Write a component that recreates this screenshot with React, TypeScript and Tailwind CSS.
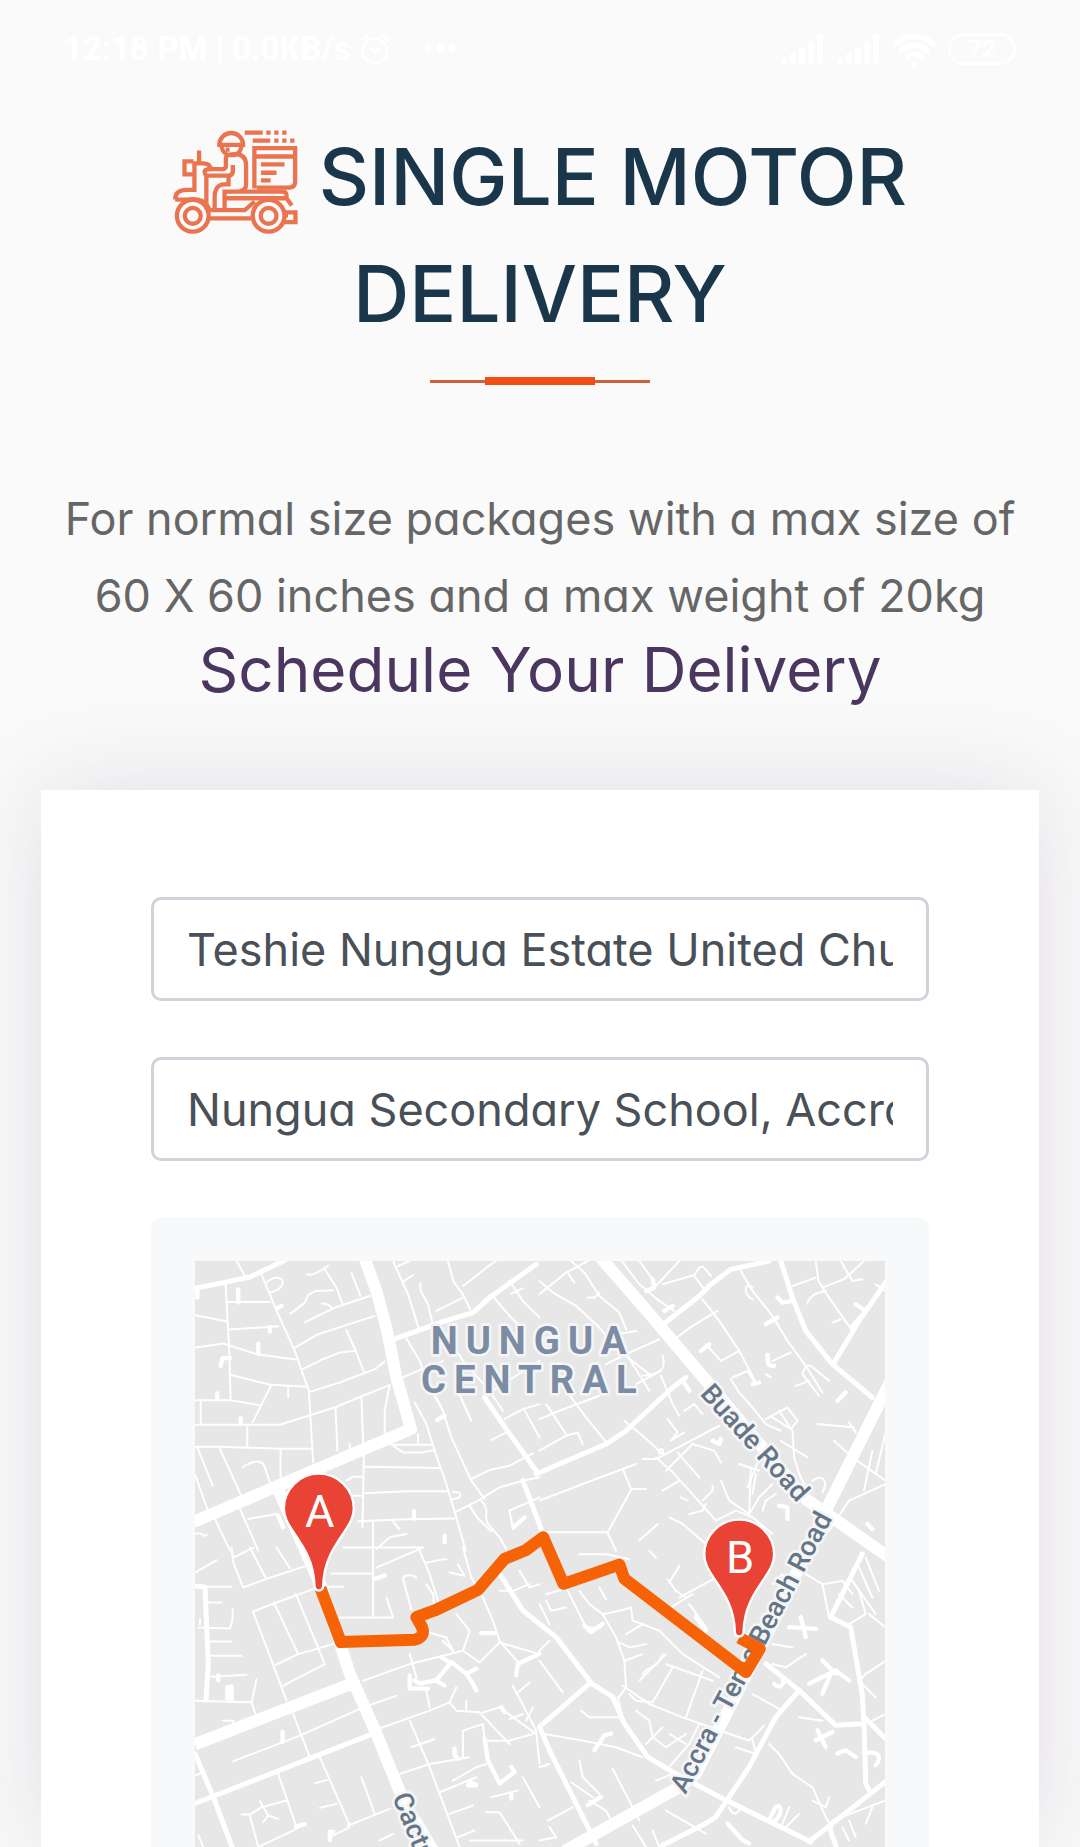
import { Wifi } from "lucide-react";

const minorTopLeft = [
  "M15 193L112 212", "M107 100L118 300L122 445", "M140 30L165 75", "M215 70L260 180L315 300L357 420L370 635",
  "M112 153L240 153", "M118 236L265 226", "M15 290L100 278L200 310L318 326", "M122 372L240 402L355 408",
  "M245 402L188 515", "M15 448H120L208 463", "M15 522H270L365 492L440 468L600 402", "M32 448V520", "M172 522V588",
  "M15 588H90L270 594L362 594", "M22 590L68 705", "M15 672L52 775", "M88 590L155 738", "M272 595V680",
  "M158 650C185 632 215 622 225 650L240 695", "M230 95C255 70 290 80 275 105C265 120 250 122 240 125",
  "M302 188L345 155L355 132L378 120L430 118", "M350 70C375 75 385 62 415 45", "M405 55L440 110L458 158",
  "M345 214L440 168L540 135", "M395 158C410 158 415 160 428 172", "M485 66L512 135", "M315 290L385 250L555 195",
  "M470 238L500 305L522 362", "M340 354L400 325L450 305L495 300", "M357 424L450 395L555 355L585 332",
  "M295 408V440", "M437 470L443 600", "M515 435L520 580", "M600 402L585 480V550",
  "M610 30L655 130L688 235", "M625 45L660 30", "M640 92L670 72", "M692 95V118L715 160L728 215",
  "M775 30L792 92L820 130L842 175", "M820 140L740 180", "M820 105L860 75L890 50L920 30", "M905 130L960 195L985 220",
  "M960 90L1000 150L1050 200", "M965 128L1000 112", "M650 262L690 330L715 400L760 480L785 560L845 690L885 745",
  "M610 392L720 345L760 330", "M675 455L710 520L735 600L770 700L800 800L828 900", "M600 578L640 605H700L735 598",
  "M610 582H725", "M685 550V578", "M522 610V640L518 830", "M525 648L752 652", "M525 728L650 722H775",
  "M505 812L650 806L795 804", "M480 580V594", "M550 815V900", "M610 812L628 835", "M470 690L490 678H515",
  "M490 735H515", "M800 410L845 510", "M905 568L950 545", "M945 505L1000 475L1050 460", "M1005 478L1050 560",
  "M845 685L900 658L960 645L1030 608", "M795 785L865 750L930 710L1000 690L1050 680", "M790 725C820 720 820 745 790 745",
  "M875 750C905 780 880 800 895 820L930 860L950 895", "M840 765L862 800L905 842", "M960 780L1050 740", "M960 780L970 835",
  "M150 775L205 900", "M175 805L260 790", "M75 805L120 900", "M15 850C40 840 40 865 50 852", "M560 895L600 860L650 850",
  "M885 435L1050 330", "M940 480L900 420L820 330L780 270", "M740 440L760 480",
];
const minorTopRight = [
  "M0 130L80 65L145 30", "M85 65L105 95", "M95 30L135 65L180 135L240 185L260 235", "M145 140H165L180 125",
  "M0 90L40 125L110 165L180 230L240 300L330 370", "M240 20L300 100L360 150L405 180", "M300 30L340 85", "M340 115L420 30",
  "M370 100L465 72L480 50C495 40 500 60 515 75", "M465 75L495 115", "M490 145L540 210L600 300L650 395", "M405 265L460 225L535 180",
  "M500 280L545 330L600 300", "M605 60L640 120L700 195L745 270L800 345L850 425", "M640 145C610 130 615 90 640 110",
  "M700 330L755 305", "M760 105L830 80", "M830 30L838 90L870 140L940 240", "M805 155C815 130 835 125 860 120",
  "M905 30L940 90L970 85", "M850 110L915 85L975 30", "M880 215L905 205", "M1010 100L1040 120",
  "M800 345H815L870 390", "M800 345L790 370L840 435", "M770 405L810 390", "M580 380L625 360L650 400",
  "M575 385L600 425L640 470L680 520L725 540", "M680 370L695 380", "M680 505L745 470L775 510L755 535L700 500",
  "M720 480L760 540L765 620L780 670L800 710", "M725 570L805 620", "M835 520L945 530", "M930 515L950 545",
  "M885 570L940 620L1040 690", "M1000 600L975 720", "M1040 545L1010 670", "M180 305L230 250L290 240", "M200 340L260 310L360 265",
  "M240 270L280 340L330 420", "M370 315C380 350 370 370 310 375", "M365 375L400 460L420 495", "M290 400L365 360",
  "M0 600L80 555L115 545L130 580", "M20 460L80 550", "M80 420L140 500L205 580", "M0 505L60 480L180 435", "M255 510L310 555L370 610",
  "M0 750L130 700L290 640", "M250 655L275 715H320", "M275 718L205 845L0 845", "M205 848L230 900", "M310 625L350 625L540 525",
  "M350 620L400 665L450 720L530 810", "M415 605L480 680", "M360 610C350 590 380 590 370 610", "M380 660L430 610L460 580",
  "M460 580L525 600L545 635", "M385 505L415 545L395 570L435 545", "M370 720L420 690", "M425 740L445 750", "M435 480L465 460L490 490",
  "M545 690L570 750L630 790L660 740L700 700", "M635 655L630 785", "M490 750L520 720V705", "M670 600L625 710", "M600 640L660 660",
  "M530 810L590 780L640 800L700 850", "M450 790L490 780L500 760", "M390 800L430 820L500 880", "M300 870L355 820", "M650 670L640 730",
  "M800 860L870 840L930 750L1040 700", "M670 780L680 750L710 730", "M820 690C850 670 870 690 850 725",
];
const minorBottomLeft = [
  "M15 75L80 38", "M125 0L130 45L160 120L235 92L350 55", "M180 0L228 92", "M260 0L300 62", "M130 30L190 0",
  "M40 118H125", "M45 165H95", "M25 240L120 243L128 215V185", "M30 230V215", "M50 282H125", "M50 325H155", "M65 388L170 382",
  "M15 460L185 465L200 395", "M185 465L200 510", "M100 520H130V545", "M190 192L220 180L370 125",
  "M190 195L230 300L290 460", "M252 165L325 320L258 352", "M318 140L405 350L280 415", "M325 320L430 290", "M310 500L360 630",
  "M130 642L330 565L520 480L620 445", "M390 630L480 835", "M375 708L412 698", "M265 680L320 840", "M390 782L440 770",
  "M475 835L600 785", "M515 690L555 800", "M480 840L420 870", "M155 802H180L215 780L290 760", "M180 805L205 900",
  "M210 762L235 805L220 825", "M235 805L265 815", "M205 900L320 845", "M15 685L40 675", "M25 865L40 900",
  "M425 78H550", "M410 118H460", "M450 210H610L590 150", "M550 0V205", "M460 0H700L560 60",
  "M690 10L720 80L745 160", "M770 35C740 35 730 45 710 45", "M665 185L640 95C640 80 670 80 680 90", "M820 0L845 90L880 150L910 220L930 280L990 350",
  "M805 50L825 85L780 75", "M710 110L730 140L735 190", "M520 400L660 350L820 310L840 250L800 200", "M660 320L680 390",
  "M700 250L770 270L790 310", "M820 310L870 345L930 285L1050 320", "M760 280L790 310", "M565 545L720 490L780 465L800 420",
  "M720 480L710 430", "M780 465L800 490L870 495L960 590", "M660 520L720 660L810 900", "M630 680L720 650L840 630", "M665 600L735 575",
  "M820 630V550L880 530L885 580H960L1030 560", "M750 735L860 690", "M780 800L850 775", "M805 870L855 850",
  "M790 700L860 660L890 650", "M905 750L985 730", "M970 415L1040 550L1050 650", "M980 440L1020 405", "M880 495L930 480L1040 560",
  "M960 515L1000 500", "M1030 480L1010 520", "M890 795L930 795L990 890", "M1050 780L1000 690", "M840 880L1000 880",
  "M570 880L610 860", "M990 70L1020 120L1050 110", "M930 130H970L1020 110", "M830 460V490",
];
const minorBottomRight = [
  "M80 120L110 180L140 240H185", "M20 160L35 190L80 180", "M20 140L70 125", "M30 280L0 310", "M0 170L30 230",
  "M120 130L150 170L190 200L230 270L255 340L260 420L235 455", "M120 20H200L270 35", "M180 120L200 155", "M330 10L350 30",
  "M390 105L420 55", "M385 95L410 130L440 150", "M370 200L410 170L460 140", "M420 150L530 90", "M450 170L500 240",
  "M190 200L240 190L275 180L280 220L310 230", "M260 260L310 230L360 250L430 320L540 390", "M240 285L270 300L320 290",
  "M255 340L310 320", "M310 380C330 350 350 370 370 320", "M300 400L350 350L380 320", "M250 415L330 470L430 510L600 570L630 580L675 535",
  "M270 440L290 460L340 465L400 360", "M380 350L520 400", "M490 370L440 510", "M235 450L250 510L150 510L125 490",
  "M0 340L70 435", "M290 490L330 520L340 570L380 600L440 560", "M320 590L370 540", "M480 530L450 590L380 670", "M390 560L440 590",
  "M15 560L130 580L230 600L310 630", "M120 640L130 690L180 740", "M95 705L160 750", "M220 665L300 820", "M280 835L320 900",
  "M590 600L650 620L640 575", "M150 760L200 790L220 830", "M0 660L30 650", "M25 820L100 780", "M0 880L50 870L30 840",
  "M640 440L730 490", "M690 590L720 620L760 680L820 720L860 810L880 840", "M780 510L850 520", "M820 760L860 780L870 750",
  "M740 840L780 800", "M750 780L730 830", "M940 140L910 100L850 110L800 80", "M930 230L980 200L960 130L940 100", "M900 140L940 180",
  "M940 100L1010 200", "M960 60L1000 150", "M980 30L1020 130", "M870 210L850 110", "M700 350L740 360L800 320", "M700 290L760 300",
  "M700 110L730 80L760 140", "M1040 340L980 380L960 400L1010 450", "M990 200L1040 240", "M1000 520L1040 500",
  "M880 820L1040 760", "M930 820L950 870", "M910 840L930 880", "M1000 780L980 830", "M380 790L450 830L500 860",
  "M350 700L400 680L320 630", "M570 780C580 810 600 800 600 780", "M340 850L360 900",
];
const stubs = [
  "M22 110V140", "M145 115V155", "M240 228V242", "M205 278V308", "M120 322H98L92 345", "M82 428V445", "M152 502V520", "M262 172L275 165",
  "M673 782V805", "M765 855V875", "M742 508L765 495", "M265 795L280 830", "M972 830L1005 800",
  "M1370 120L1395 110L1390 85", "M1425 180L1450 165", "M1535 300L1560 280", "M1730 220L1765 200", "M1735 312C1735 345 1740 345 1755 345",
  "M1690 400L1710 395", "M1765 140L1780 155L1810 150", "M2000 160L2030 180L1990 225", "M1945 450L1970 425", "M1480 390L1500 420",
  "M1570 570L1590 580L1595 565", "M1770 765L1795 770V805", "M2035 820L2050 835",
  "M112 1345V1310L125 1308V1350", "M85 1275V1290", "M278 1445V1475", "M318 1730L345 1722", "M420 1770V1745L430 1745",
  "M555 985L585 975", "M875 1148H915", "M660 1275V1315H715", "M675 1290L690 1300L740 1290L785 1235L830 1270L850 1300L860 1320",
  "M830 1270L860 1255", "M735 1290L765 1305", "M755 1220L785 1240", "M885 1465L895 1530L930 1600L975 1565L965 1550", "M835 1605L860 1605L840 1595",
  "M795 1495V1515L805 1525", "M935 1370L945 1385", "M965 1630V1645", "M980 1275L985 1240L1050 1210",
  "M1185 1125L1205 1145L1240 1120", "M1520 1100L1550 1140", "M1215 1500L1245 1455L1265 1450", "M1195 1665L1235 1640",
  "M1800 1130L1880 1135M1835 1100L1850 1160", "M1860 1300L1940 1260L1980 1290M1900 1230L1940 1270M1900 1330L1925 1270",
  "M1885 1440L1910 1490M1880 1470L1930 1445", "M1945 1510L1970 1500L2000 1520", "M2025 1510C2070 1500 2080 1520 2060 1545",
  "M1740 1710L1760 1670C1780 1660 1780 1690 1755 1715", "M1755 1300C1770 1320 1790 1300 1780 1285", "M1615 1720L1660 1770L1680 1780",
];
const mediumRoads = [
  "M15 112L100 95L180 78L285 28", "M605 268L760 212L850 185L900 140L1040 40", "M885 440L950 535L1040 660",
  "M1000 690L1055 835", "M1040 670L1250 580L1310 540L1450 410L1490 380", "M1425 218L1530 135L1565 100L1625 55L1740 30",
  "M1775 30L1810 140L1850 240L1930 340L2050 440", "M1935 335L2010 210L2100 80",
  "M15 1006L45 1010L55 1240L48 1350", "M15 1510L70 1640L130 1800", "M15 1660L550 1450", "M930 970L1000 1080L1100 1160L1205 1298L1270 1340L1305 1420L1375 1520L1450 1565L1600 1645L1865 1775",
  "M1200 1300L1050 1430L1080 1500L1220 1780", "M1830 1320L1760 1400L1680 1550L1580 1700L1550 1720L1420 1785", "M1730 1240L1830 1320L1940 1425L2025 1420L2020 1335L1985 1130L1925 1100L2020 910",
  "M1860 1775L2095 1590", "M2025 1420L2030 1600L2040 1620", "M1920 1730L1945 1800", "M2025 1400L2095 1470",
];
const majorRoads = [
  "M520 10L560 120L590 230L620 380L664 535L15 812", "M262 710L395 1010L480 1270L560 1450L645 1660L760 1850",
  "M1225 10L1360 165L1530 365L1850 745L2100 920", "M2110 380L1920 760L1750 1120L1520 1570L1470 1610L1130 1800",
];

function Streets({ paths, width }: { paths: string[]; width: number }) {
  return (
    <g fill="none" stroke="#fff" strokeWidth={width} strokeLinecap="round" strokeLinejoin="round">
      {paths.map((d) => (
        <path key={d} d={d} />
      ))}
    </g>
  );
}

function Pin({ x, y, label }: { x: number; y: number; label: string }) {
  return (
    <g transform={`translate(${x} ${y})`}>
      <path
        d="M0 0C-9 0-13-4-13-14C-15-85-42-125-76-175C-92-200-105-220-105-246A105 105 0 0 1 105-246C105-220 92-200 76-175C42-125 15-85 13-14C13-4 9 0 0 0Z"
        fill="#e94335"
        stroke="#fff"
        strokeWidth="7"
      />
      <text x="3" y="-192" textAnchor="middle" fontSize="136" fill="#fff">
        {label}
      </text>
    </g>
  );
}

function RouteMap() {
  return (
    <svg viewBox="15 30 2073 1761" className="block w-full font-['Roboto',sans-serif]" role="img" aria-label="Route map">
      <rect x="15" y="30" width="2073" height="1761" fill="#e7e7e7" />
      <Streets paths={minorTopLeft} width={6} />
      <g transform="translate(1050 0)">
        <Streets paths={minorTopRight} width={6} />
      </g>
      <g transform="translate(0 891)">
        <Streets paths={minorBottomLeft} width={6} />
      </g>
      <g transform="translate(1050 891)">
        <Streets paths={minorBottomRight} width={6} />
      </g>
      <Streets paths={stubs} width={13} />
      <Streets paths={mediumRoads} width={15} />
      <Streets paths={majorRoads} width={36} />
      <path d="M15 1482L490 1298" stroke="#fff" strokeWidth="36" />

      <g fill="#7c8ca5" stroke="#f4f5f6" strokeWidth="16" strokeLinejoin="round" paintOrder="stroke" fontWeight="700">
        <text x="723" y="309" fontSize="115" letterSpacing="24">NUNGUA</text>
        <text x="694" y="426" fontSize="115" letterSpacing="24">CENTRAL</text>
      </g>
      <g fill="#667585" stroke="#f4f5f6" strokeWidth="16" strokeLinejoin="round" paintOrder="stroke" fontWeight="500" fontSize="82">
        <text transform="translate(1530 430) rotate(48)">Buade Road</text>
        <text transform="translate(1489 1634) rotate(-62)">Accra - Tema Beach Road</text>
        <text transform="translate(607 1640) rotate(68)">Cactus</text>
      </g>

      <path
        d="M392 1013L453 1175L675 1168C705 1160 705 1140 690 1118L680 1100L735 1080L865 1018L945 925L1010 898L1061 860L1122 1000L1290 942L1305 985L1670 1265L1712 1195L1650 1162"
        fill="none"
        stroke="#f66206"
        strokeWidth="36"
        strokeLinejoin="round"
      />
      <Pin x={387} y={1020} label="A" />
      <Pin x={1650} y={1158} label="B" />
    </svg>
  );
}

function ScooterIcon() {
  return (
    <svg viewBox="48 43 376 317" className="inline-block h-[105px] w-[125px] align-[-29px]" fill="none" stroke="#ea7450" strokeWidth="13" aria-hidden="true">
      <circle cx="107" cy="305" r="48" />
      <circle cx="107" cy="305" r="24" />
      <circle cx="336" cy="305" r="48" />
      <circle cx="336" cy="305" r="24" />
      <path d="M54 256C54 236 66 227 88 227H112V147H138C154 147 157 152 163 164H198Q207 164 207 155V132C207 122 218 119 233 119C262 119 268 135 268 152V210Q268 230 248 230" />
      <path d="M54 256H88C130 252 145 258 158 288H264L294 262" />
      <path d="M126 108V147M109 141H82V180H109M147 184C136 164 148 164 163 164M147 184H215Q228 184 228 170V152M148 186V285" />
      <path d="M215 186V210H198C180 212 173 230 173 248V286M203 283V232H377Q390 232 390 243V252H203M390 252L406 274" />
      <path d="M158 313H284M384 295H417V324H382M388 310V295" />
      <path d="M187 91A36 36 0 0 1 259 91V91H187ZM194 92C195 114 210 122 223 122C240 122 253 113 254 92M207 105H218" />
      <path d="M293 223V101H416V205Q414 219 399 220H300M293 126H416" />
      <path d="M313 150H384M313 175H360M313 198H342M264 54H318M288 78H341" />
      <path d="M329 54H342M353 54H366M377 54H390M353 78H366M377 78H390M401 78H414" />
    </svg>
  );
}

function SignalBars() {
  return (
    <svg viewBox="0 0 44 32" className="h-8 w-11" fill="#fff" aria-hidden="true">
      <rect x="1" y="25" width="6" height="6" rx="2" />
      <rect x="10" y="20" width="6" height="11" rx="2" />
      <rect x="19" y="14" width="6" height="17" rx="2" />
      <rect x="28" y="8" width="6" height="23" rx="2" />
      <rect x="37" y="1" width="6" height="30" rx="2" />
    </svg>
  );
}

function StatusBar() {
  return (
    <header className="flex h-[98px] items-center px-16 font-['Roboto',sans-serif] text-[33px] font-bold text-white">
      <span>12:18 PM | 0.0KB/s</span>
      <svg viewBox="0 0 32 34" className="ml-2 size-8" fill="none" stroke="#fff" strokeWidth="3" strokeLinecap="round" aria-hidden="true">
        <circle cx="16" cy="19" r="13" />
        <path d="M2 7L8 2M30 7L24 2M12 17L16 21L20 17" />
      </svg>
      <span className="ml-8">•••</span>
      <div className="ml-auto flex items-center gap-3">
        <SignalBars />
        <SignalBars />
        <Wifi className="size-11" strokeWidth={3} />
        <span className="flex h-8 w-17 items-center justify-center rounded-full border-3 border-white text-2xl">72</span>
      </div>
    </header>
  );
}

function PlaceField({ label, value }: { label: string; value: string }) {
  return (
    <input
      type="text"
      aria-label={label}
      defaultValue={value}
      className="h-26 w-full rounded-[10px] border-3 border-[#ced4da] bg-white px-[33px] text-[45px] text-[#495057]"
    />
  );
}

export default function App() {
  return (
    <div className="overflow-hidden bg-[#fafafa] font-['Inter',sans-serif] [font-feature-settings:'cv11']">
      <StatusBar />
      <main className="px-[41px]">
        <section className="text-center">
          <h1 className="pt-5 text-[78px] leading-[117px] font-medium text-[#19364a]">
            <ScooterIcon /> SINGLE MOTOR
            <br />
            DELIVERY
          </h1>
          <div className="mt-[25px] flex items-center justify-center">
            <span className="h-[3px] w-[55px] bg-[#d0603a]" />
            <span className="h-2 w-[110px] bg-[#f04e16]" />
            <span className="h-[3px] w-[55px] bg-[#d0603a]" />
          </div>
          <p className="mt-[95px] text-[45px] leading-[77px] text-[#666]">
            For normal size packages with a max size of 60 X 60 inches and a max weight of 20kg
          </p>
          <h2 className="text-[62px] leading-[72px] text-[#4b3660]">Schedule Your Delivery</h2>
        </section>
        <form className="mt-21 flex flex-col gap-14 bg-white px-[110px] pt-[107px] shadow-[0_0_90px_rgba(60,30,80,0.13)]">
          <PlaceField label="Pickup location" value="Teshie Nungua Estate United Church" />
          <PlaceField label="Drop-off location" value="Nungua Secondary School, Accra, Ghana" />
          <div className="rounded-t-[10px] bg-[#f8f9fa] px-11 pt-11">
            <RouteMap />
          </div>
        </form>
      </main>
    </div>
  );
}
